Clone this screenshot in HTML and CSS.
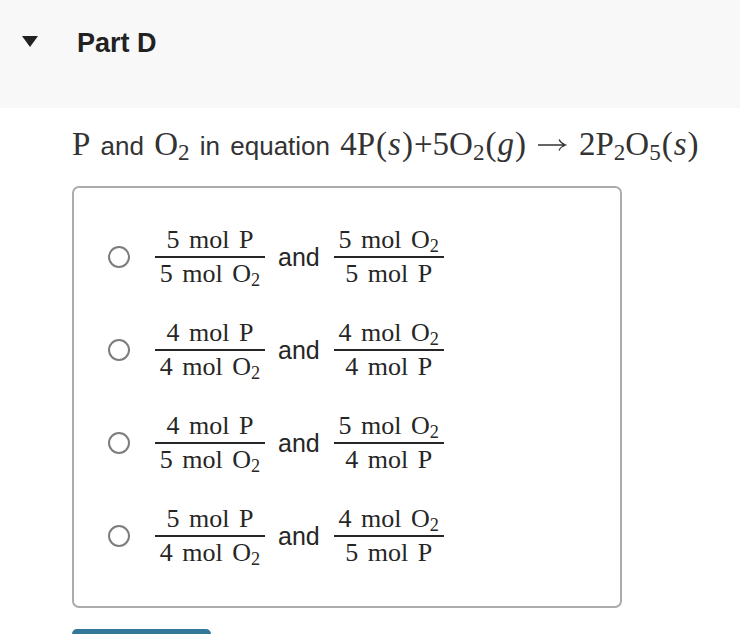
FILE: index.html
```html
<!DOCTYPE html>
<html lang="en">

<head>
    <meta charset="UTF-8" />
    <meta name="viewport" content="width=device-width, initial-scale=1.0" />
    <title>Part D</title>
    <link rel="stylesheet" href="styles.css">
</head>

<body>
    <div class="part">
        <div class="part-header">
            <svg class="caret" width="16" height="11" viewBox="0 0 16 11"><path d="M0 0H16L8 11Z" /></svg>
            <h2 class="part-title">Part D</h2>
        </div>

        <div class="part-body">
            <p class="question">
                <span class="m">P</span> and <span class="m">O<sub>2</sub></span> in equation
                <span class="m">4P<span class="p">(</span><i>s</i><span class="p">)</span>+5O<sub>2</sub><span class="p">(</span><i>g</i><span class="p">)</span><svg class="arrow" width="30" height="14" viewBox="0 0 30 14"><path d="M1 7H28M22 1.5Q24 5.5 28.5 7Q24 8.5 22 12.5" /></svg>2P<sub>2</sub>O<sub>5</sub><span class="p">(</span><i>s</i><span class="p">)</span></span>
            </p>

            <div class="choices">
                <label class="choice">
                    <input type="radio" name="ratio" class="radio">
                    <span class="frac"><span class="num">5 mol P</span><span class="den">5 mol O<sub>2</sub></span></span>
                    <span class="and">and</span>
                    <span class="frac"><span class="num">5 mol O<sub>2</sub></span><span class="den">5 mol P</span></span>
                </label>
                <label class="choice">
                    <input type="radio" name="ratio" class="radio">
                    <span class="frac"><span class="num">4 mol P</span><span class="den">4 mol O<sub>2</sub></span></span>
                    <span class="and">and</span>
                    <span class="frac"><span class="num">4 mol O<sub>2</sub></span><span class="den">4 mol P</span></span>
                </label>
                <label class="choice">
                    <input type="radio" name="ratio" class="radio">
                    <span class="frac"><span class="num">4 mol P</span><span class="den">5 mol O<sub>2</sub></span></span>
                    <span class="and">and</span>
                    <span class="frac"><span class="num">5 mol O<sub>2</sub></span><span class="den">4 mol P</span></span>
                </label>
                <label class="choice">
                    <input type="radio" name="ratio" class="radio">
                    <span class="frac"><span class="num">5 mol P</span><span class="den">4 mol O<sub>2</sub></span></span>
                    <span class="and">and</span>
                    <span class="frac"><span class="num">4 mol O<sub>2</sub></span><span class="den">5 mol P</span></span>
                </label>
            </div>

            <button class="btn" type="button"></button>
        </div>
    </div>
</body>

</html>
```

FILE: styles.css
```css
body {
    margin: 0;
    background-color: #fff;
    color: #262626;
    font-family: 'Liberation Sans', Arial, sans-serif;
}

.part-header {
    height: 108px;
    box-sizing: border-box;
    padding: 28px 0 0 22px;
    display: flex;
    align-items: flex-start;
    background-color: #f8f8f8;
}

.caret {
    margin-top: 8px;
    fill: #222;
}

.part-title {
    margin: 0 0 0 39px;
    font-size: 27px;
    line-height: 30px;
    font-weight: bold;
    color: #222;
}

.question {
    margin: 0;
    padding: 16px 0 0 72px;
    font-size: 26px;
    line-height: 40px;
    color: #333;
    word-spacing: 3px;
}

.m {
    font-family: 'Liberation Serif', 'DejaVu Serif', serif;
    font-size: 33px;
    word-spacing: 0;
}

.m i {
    font-style: italic;
}

.p {
    margin: 0 1px;
}

.arrow {
    margin: 0 12px 0 10px;
    fill: none;
    stroke: #333;
    stroke-width: 1.3;
    vertical-align: 3px;
}

sub {
    font-size: 0.7em;
    line-height: 0;
    vertical-align: -0.22em;
}

.choices {
    width: 550px;
    box-sizing: border-box;
    margin: 20px 0 0 72px;
    padding: 22px 0 24px;
    border: 2px solid #acacac;
    border-radius: 7px;
}

.choice {
    height: 93px;
    padding-left: 34px;
    display: flex;
    align-items: center;
    color: #262626;
}

.radio {
    appearance: none;
    -webkit-appearance: none;
    width: 22px;
    height: 22px;
    margin: 0 25px 0 0;
    border: 2px solid #7d7d7d;
    border-radius: 50%;
    background-color: #fff;
}

.frac {
    display: inline-flex;
    flex-direction: column;
    align-items: center;
    width: 110px;
    font-family: 'Liberation Serif', 'DejaVu Serif', serif;
    font-size: 26px;
    word-spacing: 3px;
}

.num {
    line-height: 26px;
    padding-bottom: 3px;
    border-bottom: 2px solid #262626;
    align-self: stretch;
    text-align: center;
}

.den {
    line-height: 26px;
    padding-top: 3px;
}

.and {
    margin: 0 14px 0 13px;
    font-size: 25px;
    line-height: 30px;
}

.btn {
    display: block;
    width: 139px;
    height: 40px;
    margin: 21px 0 0 72px;
    border: none;
    border-radius: 5px;
    background-color: #32789a;
}
```
